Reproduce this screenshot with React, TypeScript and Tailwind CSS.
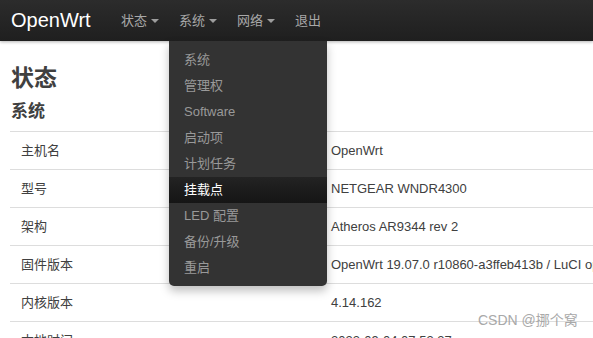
import React from "react";

const rows: [string, string][] = [
  ["主机名", "OpenWrt"],
  ["型号", "NETGEAR WNDR4300"],
  ["架构", "Atheros AR9344 rev 2"],
  ["固件版本", "OpenWrt 19.07.0 r10860-a3ffeb413b / LuCI openwrt-19.07 branch git-20.029.45734-05e8a4f"],
  ["内核版本", "4.14.162"],
  ["本地时间", "2023-09-04 07:53:37"],
];

const menu = ["系统", "管理权", "Software", "启动项", "计划任务", "挂载点", "LED 配置", "备份/升级", "重启"];

function Caret() {
  return (
    <span className="inline-block ml-[4px] w-0 h-0 border-l-[4px] border-r-[4px] border-t-[4px] border-l-transparent border-r-transparent border-t-[#9d9d9d] align-middle" />
  );
}

export default function App() {
  return (
    <div
      className="relative w-[593px] h-[338px] overflow-hidden bg-white text-[13px] text-[#404040]"
      style={{ fontFamily: '"Liberation Sans", Arial, "Noto Sans CJK SC", sans-serif' }}
    >
      <div className="h-[41px] flex items-center bg-gradient-to-b from-[#2c2c2c] to-[#1f1f1f] shadow-[0_1px_3px_rgba(0,0,0,0.3)]">
        <div className="w-[111px] pl-[11px] text-[20px] text-white leading-none pb-[2px]">OpenWrt</div>
        <div className="flex items-center h-full text-[#a8a8a8] text-[13px]">
          <div className="px-[10px] flex items-center">状态<Caret /></div>
          <div className="px-[10px] flex items-center">系统<Caret /></div>
          <div className="px-[10px] flex items-center">网络<Caret /></div>
          <div className="px-[10px] flex items-center">退出</div>
        </div>
      </div>

      <div className="pl-[10px]">
        <h1 className="mt-[23px] pl-[1px] text-[23px] font-bold leading-[28px] text-[#404040]">状态</h1>
        <h2 className="mt-[9px] pl-[1px] text-[17px] font-bold leading-[22px] text-[#404040] pb-[8px] border-b border-[#dddddd] w-[800px]">系统</h2>
        <div className="w-[1200px]">
          {rows.map(([k, v]) => (
            <div key={k} className="flex h-[38px] items-center border-b border-[#dddddd]">
              <div className="w-[310px] pl-[11px] shrink-0">{k}</div>
              <div className="pl-[11px] whitespace-nowrap">{v}</div>
            </div>
          ))}
        </div>
      </div>

      <div className="absolute left-[169px] top-[41px] w-[158px] bg-[#333333] rounded-b-[5px] shadow-[0_5px_10px_rgba(0,0,0,0.25)] pt-[6px] pb-[5px]">
        {menu.map((m) => (
          <div
            key={m}
            className={
              m === "挂载点"
                ? "h-[26px] flex items-center pl-[15px] text-white bg-gradient-to-b from-[#232323] to-[#151515]"
                : "h-[26px] flex items-center pl-[15px] text-[#999999]"
            }
          >
            {m}
          </div>
        ))}
      </div>

      <div className="absolute left-[478px] top-[310px] text-[14px] text-[#a0a0a0] opacity-90">CSDN @挪个窝</div>
    </div>
  );
}
